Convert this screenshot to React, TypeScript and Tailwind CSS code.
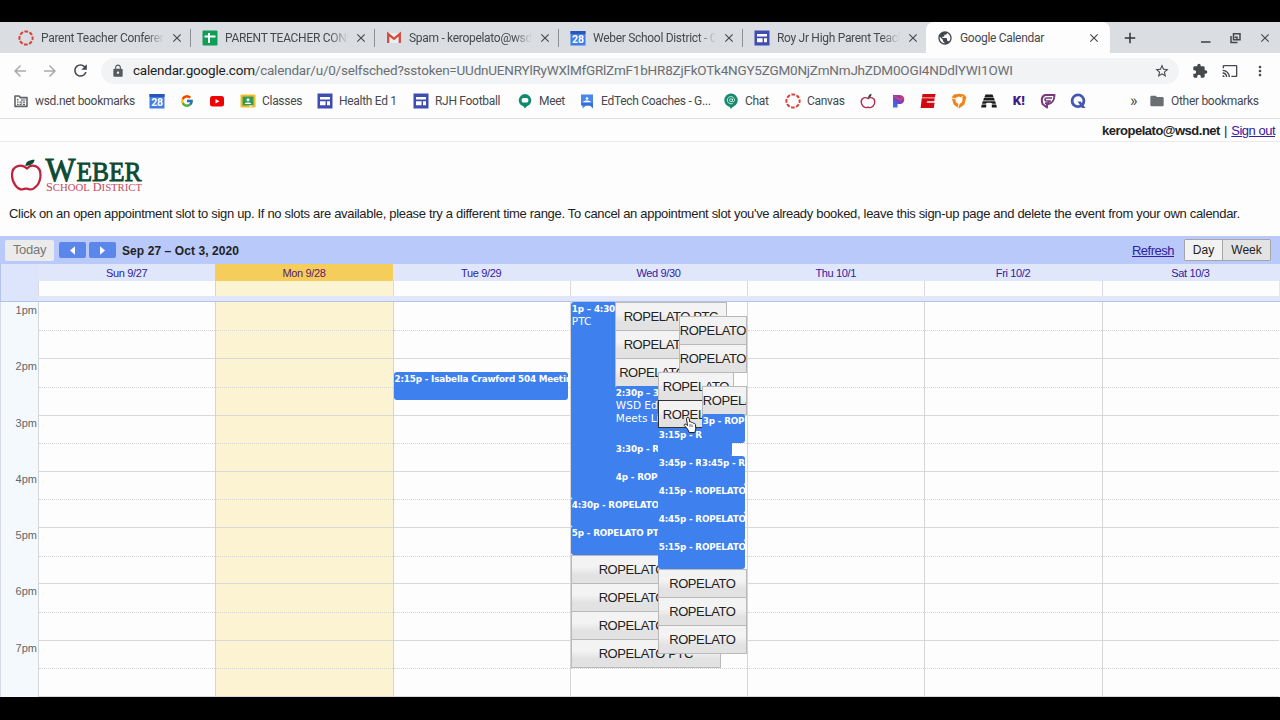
import React from "react";
import {
  MdAdd,
  MdArrowBack,
  MdArrowForward,
  MdCast,
  MdClose,
  MdExtension,
  MdFolder,
  MdLock,
  MdMoreVert,
  MdPublic,
  MdRefresh,
  MdStarBorder,
} from "react-icons/md";
import { FcGoogle } from "react-icons/fc";

const CanvasIcon: React.FC = () => (
  <svg viewBox="0 0 16 16" className="h-4 w-4 shrink-0">
    <circle
      cx="8"
      cy="8"
      r="6.6"
      fill="none"
      stroke="#d9403a"
      strokeWidth="2"
      strokeDasharray="3.7 1.48"
      strokeDashoffset="1.8"
    />
  </svg>
);

const SheetsIcon: React.FC = () => (
  <svg viewBox="0 0 16 16" className="h-4 w-4 shrink-0">
    <rect x="0.5" y="0.5" width="15" height="15" rx="1.2" fill="#109d58" />
    <path d="M7 3v10M2.5 6.5h11" stroke="#fff" strokeWidth="2" />
  </svg>
);

const GmailIcon: React.FC = () => (
  <svg viewBox="0 0 16 16" className="h-4 w-4 shrink-0">
    <path d="M2 3h12v10H2z" fill="#eceff1" />
    <path
      d="M2.2 13V4l5.8 4.8L13.8 4v9"
      fill="none"
      stroke="#d54b3d"
      strokeWidth="2.3"
    />
  </svg>
);

const CalIcon: React.FC = () => (
  <svg viewBox="0 0 16 16" className="h-4 w-4 shrink-0">
    <rect x="0.5" y="1" width="15" height="14.5" fill="#3f7de8" />
    <rect x="0.5" y="1" width="15" height="3" fill="#2a56b8" />
    <text
      x="8"
      y="13"
      textAnchor="middle"
      fontSize="10.5"
      fontWeight="700"
      fontFamily="Roboto, sans-serif"
      fill="#fff"
    >
      28
    </text>
  </svg>
);

const SitesIcon: React.FC = () => (
  <svg viewBox="0 0 16 16" className="h-4 w-4 shrink-0">
    <rect x="0.5" y="0.5" width="15" height="15" fill="#3f4db3" />
    <path d="M3 4h10v2.6H3zM3 8.2h5.6v4H3zM10 8.2h3v4h-3z" fill="#fff" />
  </svg>
);

const ManagedFolderIcon: React.FC = () => (
  <svg viewBox="0 0 16 16" className="h-4 w-4 shrink-0">
    <path
      d="M2 3h4l1.4 1.6H14v8.8H2z"
      fill="none"
      stroke="#5f6368"
      strokeWidth="1.6"
      strokeLinejoin="round"
    />
    <path
      d="M4 6h1.5v1.4H4zM4 8.4h1.5v1.4H4zM4 10.7h1.5V12H4zM6.5 8.4H8v1.4H6.5zM6.5 10.7H8V12H6.5zM9 6.5h3.4v1H9zM10 8.4h2v1.4h-2zM10 10.7h2V12h-2zM8.4 6h.8v6h-.8z"
      fill="#5f6368"
    />
  </svg>
);

const YoutubeIcon: React.FC = () => (
  <svg viewBox="0 0 16 16" className="h-4 w-4 shrink-0">
    <rect x="1" y="3" width="14" height="10.5" rx="2.5" fill="#f00000" />
    <path d="M6.5 6v4.5l4-2.25z" fill="#fff" />
  </svg>
);

const ClassroomIcon: React.FC = () => (
  <svg viewBox="0 0 16 16" className="h-4 w-4 shrink-0">
    <rect x="0.5" y="1.5" width="15" height="13" rx="1" fill="#f0bd26" />
    <rect x="2.6" y="3.6" width="10.8" height="8.8" fill="#2f9a5a" />
    <circle cx="8" cy="6.8" r="1.5" fill="#fff" />
    <path d="M4.8 11c.3-1.9 6.1-1.9 6.4 0z" fill="#fff" />
    <path d="M9 12.4h3.5v1.2H9z" fill="#e8eee9" />
  </svg>
);

const MeetIcon: React.FC = () => (
  <svg viewBox="0 0 16 16" className="h-4 w-4 shrink-0">
    <circle cx="8" cy="7.3" r="6.2" fill="#0f8a6c" />
    <path d="M6 12.5h4.5L7.8 15.5z" fill="#0f8a6c" />
    <rect x="4.7" y="5" width="6.6" height="4.6" rx="1.6" fill="#fff" />
  </svg>
);

const GroupsIcon: React.FC = () => (
  <svg viewBox="0 0 16 16" className="h-4 w-4 shrink-0">
    <path d="M2 1.5h12v11H7l-3.5 3V12.5H2z" fill="#4a86ee" />
    <path d="M2 10h12v5.5l-3-3H3z" fill="#356ed4" />
    <circle cx="8" cy="5.5" r="1.3" fill="#fff" />
    <path d="M4 9.3c.3-2.4 7.7-2.4 8 0z" fill="#fff" />
  </svg>
);

const ChatIcon: React.FC = () => (
  <svg viewBox="0 0 16 16" className="h-4 w-4 shrink-0">
    <circle cx="8" cy="7.3" r="6.7" fill="#17896f" />
    <path d="M6 12.5h5L7.8 16z" fill="#17896f" />
    <circle cx="8" cy="7.3" r="1.5" fill="none" stroke="#d6f0e8" strokeWidth="0.9" />
    <path
      d="M9.5 5.8v2.2c.3 1.2 2 .8 2-.8a3.6 3.6 0 1 0-1.6 3"
      fill="none"
      stroke="#d6f0e8"
      strokeWidth="0.9"
    />
  </svg>
);

const AppleIcon: React.FC = () => (
  <svg viewBox="0 0 16 16" className="h-4 w-4 shrink-0">
    <path
      d="M8.2 5.6C6 4 1.3 4.200 1.200 8.800c0 3.300 2.700 6 5 5.800 1-.4 2.600-.4 3.600 0 2.300.2 5-2.500 5-5.800C14.700 4.200 10 4 8.200 5.600z"
      fill="none"
      stroke="#b02c50"
      strokeWidth="1.4"
    />
    <path d="M8.2 5.500C7.800 3.200 9 1.200 11.500.8 11.700 3 10.500 4.500 8.200 5.500z" fill="#314f3a" />
  </svg>
);

const PIcon: React.FC = () => (
  <svg viewBox="0 0 16 16" className="h-4 w-4 shrink-0">
    <defs>
      <linearGradient id="pgrad" x1="0" y1="1" x2="1" y2="0">
        <stop offset="0" stopColor="#2c7bf0" />
        <stop offset="0.5" stopColor="#7044c8" />
        <stop offset="1" stopColor="#e0306c" />
      </linearGradient>
    </defs>
    <path d="M3 2h7c6 .5 5.500 9 0 9H7.500v3.500H3z" fill="url(#pgrad)" />
    <path d="M4 3l6 4 2.5-2.5" fill="none" stroke="#e44373" strokeWidth="1.3" />
  </svg>
);

const EIcon: React.FC = () => (
  <svg viewBox="0 0 16 16" className="h-4 w-4 shrink-0">
    <path d="M2.5 1h13l-.6 3.6H2z" fill="#cf0a10" />
    <path d="M1.8 5.2H7.500L6.800 9.800h7.800L13.800 15H.6z" fill="#cf0a10" />
    <path d="M7 5.200h7.600l-.4 3H7z" fill="#cf0a10" />
  </svg>
);

const ShieldIcon: React.FC = () => (
  <svg viewBox="0 0 16 16" className="h-4 w-4 shrink-0">
    <path d="M3 1.5l5-.7 5 .7 2.4 2.7-2 7.3L8 15.5l-5.4-4L.6 4.2z" fill="#f08418" />
    <path d="M4.5 5L8 3.6 11.500 5l-.3 4L8 11.500 4.800 9z" fill="#fff" />
    <path d="M1 5l4 1M11.500 3l-1 2M8 11l-1 4" stroke="#fff" strokeWidth="0.9" />
  </svg>
);

const DomeIcon: React.FC = () => (
  <svg viewBox="0 0 16 16" className="h-4 w-4 shrink-0">
    <path
      d="M4.5 1.500h7l1.200 2.900H3.300zM3 5.100h10l.9 2.500H2.100zM1.800 8.200h12.400l.8 2.600h-3.600c-.6-1.400-6.200-1.400-6.800 0H1zM.8 11.400h4.400v3.200H.1zM10.800 11.400h4.400l.7 3.200h-5.100z"
      fill="#1b1b1b"
    />
  </svg>
);

const KahootIcon: React.FC = () => (
  <span className="flex h-4 w-4 shrink-0 items-center justify-center text-[13px] font-black tracking-[0.3px] text-[#401a85]">
    K!
  </span>
);

const FIcon: React.FC = () => (
  <svg viewBox="0 0 16 16" className="h-4 w-4 shrink-0">
    <path
      d="M5 2h9.500c-.2 6-2 8.700-7.500 9.500v3L2.500 11C1 6 2.200 3 5 2z"
      fill="#fff"
      stroke="#79397c"
      strokeWidth="2"
      strokeLinejoin="round"
    />
    <path
      d="M12 5H6.500C4.500 5 4.500 8 6.500 8H11M9 8c0 2-2 2.500-4 2"
      fill="none"
      stroke="#79397c"
      strokeWidth="1.7"
    />
  </svg>
);

const QIcon: React.FC = () => (
  <svg viewBox="0 0 16 16" className="h-4 w-4 shrink-0">
    <circle cx="8" cy="7.8" r="5.9" fill="none" stroke="#4257b2" strokeWidth="2.8" />
    <path d="M7.5 8.5h3.2l4.8 6.5H12z" fill="#4257b2" />
  </svg>
);

const tabs = [
  { icon: <CanvasIcon />, title: "Parent Teacher Conferences" },
  { icon: <SheetsIcon />, title: "PARENT TEACHER CONFERENCE" },
  { icon: <GmailIcon />, title: "Spam - keropelato@wsd.net" },
  { icon: <CalIcon />, title: "Weber School District - Calendar" },
  { icon: <SitesIcon />, title: "Roy Jr High Parent Teacher" },
];

const bookmarks = [
  { icon: <ManagedFolderIcon />, label: "wsd.net bookmarks", width: "w-[136px]" },
  { icon: <CalIcon />, label: "", width: "w-[30px]" },
  { icon: <FcGoogle className="h-4 w-4 shrink-0 p-px" />, label: "", width: "w-[30px]" },
  { icon: <YoutubeIcon />, label: "", width: "w-[31px]" },
  { icon: <ClassroomIcon />, label: "Classes", width: "w-[77px]" },
  { icon: <SitesIcon />, label: "Health Ed 1", width: "w-[96px]" },
  { icon: <SitesIcon />, label: "RJH Football", width: "w-[104px]" },
  { icon: <MeetIcon />, label: "Meet", width: "w-[62px]" },
  { icon: <GroupsIcon />, label: "EdTech Coaches - G...", width: "w-[144px]" },
  { icon: <ChatIcon />, label: "Chat", width: "w-[62px]" },
  { icon: <CanvasIcon />, label: "Canvas", width: "w-[75px]" },
  { icon: <AppleIcon />, label: "", width: "w-[30px]" },
  { icon: <PIcon />, label: "", width: "w-[30px]" },
  { icon: <EIcon />, label: "", width: "w-[31px]" },
  { icon: <ShieldIcon />, label: "", width: "w-[30px]" },
  { icon: <DomeIcon />, label: "", width: "w-[30px]" },
  { icon: <KahootIcon />, label: "", width: "w-[29px]" },
  { icon: <FIcon />, label: "", width: "w-[30px]" },
  { icon: <QIcon />, label: "", width: "w-[30px]" },
];

const days = ["Sun 9/27", "Mon 9/28", "Tue 9/29", "Wed 9/30", "Thu 10/1", "Fri 10/2", "Sat 10/3"];
const hours = ["1pm", "2pm", "3pm", "4pm", "5pm", "6pm", "7pm"];

interface CalItem {
  kind: "event" | "slot";
  x: number;
  y: number;
  w: number;
  h: number;
  title: string;
  body?: string;
  active?: boolean;
}

// x/y are relative to the top left corner of the day column
const tuesday: CalItem[] = [
  { kind: "event", x: 0, y: 70, w: 174, h: 28, title: "2:15p - Isabella Crawford 504 Meeting" },
];

const wednesday: CalItem[] = [
  { kind: "event", x: 0, y: 0, w: 90, h: 197, title: "1p – 4:30p", body: "PTC" },
  { kind: "slot", x: 44, y: 0, w: 112, h: 29, title: "ROPELATO PTC" },
  { kind: "slot", x: 44, y: 28, w: 112, h: 29, title: "ROPELATO PTC" },
  { kind: "slot", x: 44, y: 56, w: 103, h: 29, title: "ROPELATO PTC" },
  { kind: "slot", x: 108, y: 14, w: 68, h: 29, title: "ROPELATO" },
  { kind: "slot", x: 108, y: 42, w: 68, h: 29, title: "ROPELATO" },
  { kind: "event", x: 44, y: 84, w: 90, h: 57, title: "2:30p – 3:30p", body: "WSD EdTech\nMeets Live" },
  { kind: "event", x: 44, y: 140, w: 90, h: 29, title: "3:30p - ROPELATO" },
  { kind: "event", x: 44, y: 168, w: 90, h: 29, title: "4p - ROPELATO" },
  { kind: "event", x: 0, y: 196, w: 130, h: 29, title: "4:30p - ROPELATO PTC" },
  { kind: "event", x: 0, y: 224, w: 130, h: 29, title: "5p - ROPELATO PTC" },
  { kind: "slot", x: 87, y: 70, w: 76, h: 29, title: "ROPELATO" },
  { kind: "slot", x: 87, y: 98, w: 76, h: 28, title: "ROPELATO", active: true },
  { kind: "slot", x: 131, y: 84, w: 45, h: 29, title: "ROPELATO" },
  { kind: "event", x: 87, y: 126, w: 74, h: 29, title: "3:15p - R" },
  { kind: "event", x: 131, y: 112, w: 43, h: 29, title: "3p - ROPELATO" },
  { kind: "event", x: 87, y: 154, w: 60, h: 29, title: "3:45p - R" },
  { kind: "event", x: 130, y: 154, w: 44, h: 29, title: "3:45p - ROPELATO" },
  { kind: "event", x: 87, y: 182, w: 87, h: 29, title: "4:15p - ROPELATO" },
  { kind: "event", x: 87, y: 210, w: 87, h: 29, title: "4:45p - ROPELATO" },
  { kind: "slot", x: 0, y: 253, w: 150, h: 29, title: "ROPELATO PTC" },
  { kind: "slot", x: 0, y: 281, w: 150, h: 29, title: "ROPELATO PTC" },
  { kind: "slot", x: 0, y: 309, w: 150, h: 29, title: "ROPELATO PTC" },
  { kind: "slot", x: 0, y: 337, w: 150, h: 29, title: "ROPELATO PTC" },
  { kind: "event", x: 87, y: 238, w: 87, h: 29, title: "5:15p - ROPELATO" },
  { kind: "slot", x: 87, y: 267, w: 89, h: 29, title: "ROPELATO" },
  { kind: "slot", x: 87, y: 295, w: 89, h: 29, title: "ROPELATO" },
  { kind: "slot", x: 87, y: 323, w: 89, h: 29, title: "ROPELATO" },
];

const CalendarItem: React.FC<{ item: CalItem }> = ({ item }) => {
  const box = { left: item.x, top: item.y, width: item.w, height: item.h };
  if (item.kind === "slot") {
    return (
      <div
        style={box}
        className={`absolute flex items-center overflow-hidden border bg-linear-to-b from-[#f3f3f3] from-40% to-[#e2e2e2] to-70% pt-px text-[13px] tracking-[-0.4px] whitespace-nowrap text-[#222] ${
          item.active ? "border-[#333]" : "border-[#b9b9b9]"
        } ${item.w < 60 ? "justify-start" : "justify-center"}`}
      >
        {item.title}
      </div>
    );
  }
  return (
    <div
      style={box}
      className="absolute overflow-hidden rounded-[3px] bg-[#3e80ee] pt-px pl-px font-['DejaVu_Sans',sans-serif] text-white"
    >
      <div className="text-[8.8px] leading-[12px] font-bold tracking-[-0.18px] whitespace-nowrap">{item.title}</div>
      {item.body && (
        <div className="text-[10.5px] leading-[13px] whitespace-pre">{item.body}</div>
      )}
    </div>
  );
};

const BrowserChrome: React.FC = () => (
  <div className="font-['Roboto',sans-serif] text-[#45494d]">
    <div className="flex h-[31px] items-stretch bg-[#dadde1] pl-[7px]">
      {tabs.map((tab, i) => (
        <div key={tab.title} className="flex w-[184px] items-center pl-[11px]">
          {tab.icon}
          <div className="ml-[7px] w-[123px] overflow-hidden text-[12px] tracking-[-0.3px] whitespace-nowrap mask-r-from-85%">
            {tab.title}
          </div>
          <MdClose className="ml-[6px] h-[14px] w-[14px] shrink-0" />
          {i < tabs.length - 1 && <div className="ml-auto h-[18px] w-px bg-[#8d9195]" />}
        </div>
      ))}
      <div className="-ml-px flex w-[184px] items-center rounded-t-lg bg-[#fdfdfd] pl-[11px]">
        <MdPublic className="h-4 w-4 shrink-0" />
        <div className="ml-[7px] w-[127px] text-[12px] tracking-[-0.3px]">Google Calendar</div>
        <MdClose className="h-[14px] w-[14px] shrink-0" />
      </div>
      <div className="flex flex-1 items-center pl-[11px]">
        <MdAdd className="h-[18px] w-[18px] text-[#333]" />
        <div className="mr-[8px] ml-auto flex items-center gap-[15px]">
          <svg viewBox="0 0 14 14" className="h-[14px] w-[14px]">
            <path d="M1 11h9.5" stroke="currentColor" strokeWidth="1.6" />
          </svg>
          <svg
            viewBox="0 0 14 14"
            className="h-[14px] w-[14px]"
            fill="none"
            stroke="currentColor"
            strokeWidth="1.5"
          >
            <path d="M4.5 2.8h6.500v6H4.500z" />
            <path d="M2 5v6.500h6.500M5.500 6.200h2.500V9" />
          </svg>
          <MdClose className="h-[14px] w-[14px]" />
        </div>
      </div>
    </div>
    <div className="flex h-[35px] items-center bg-[#fdfdfd]">
      <div className="flex w-[101px] items-center gap-[12px] pl-[11px]">
        <MdArrowBack className="h-[18px] w-[18px] shrink-0 text-[#aaa]" />
        <MdArrowForward className="h-[18px] w-[18px] shrink-0 text-[#aaa]" />
        <MdRefresh className="h-[19px] w-[19px] shrink-0" />
      </div>
      <div className="flex h-[26px] w-[1078px] items-center rounded-full bg-[#f1f3f4] pl-[10px]">
        <MdLock className="h-[14px] w-[14px] shrink-0 text-[#55595d]" />
        <div className="ml-[8px] text-[13.5px] tracking-[-0.21px] whitespace-nowrap text-[#6b6f73]">
          <span className="text-[#222]">calendar.google.com</span>
          /calendar/u/0/selfsched?sstoken=UUdnUENRYlRyWXlMfGRlZmF1bHR8ZjFkOTk4NGY5ZGM0NjZmNmJhZDM0OGI4NDdlYWI1OWI
        </div>
        <MdStarBorder className="mr-[9px] ml-auto h-4 w-4 shrink-0" />
      </div>
      <div className="flex flex-1 items-center gap-[14px] pl-[13px]">
        <MdExtension className="h-4 w-4 shrink-0" />
        <MdCast className="h-4 w-4 shrink-0" />
        <MdMoreVert className="h-4 w-4 shrink-0" />
      </div>
    </div>
    <div className="flex h-[31px] items-center border-b border-[#dcdee0] bg-[#fdfdfd] pb-[4px] pl-[13px] text-[12px] tracking-[-0.3px]">
      {bookmarks.map((mark, i) => (
        <div key={i} className={`flex shrink-0 items-center gap-[6px] whitespace-nowrap ${mark.width}`}>
          {mark.icon}
          {mark.label && <span>{mark.label}</span>}
        </div>
      ))}
      <div className="ml-[30px] w-[19px] text-[16px] leading-none">»</div>
      <MdFolder className="h-4 w-4 shrink-0 text-[#6b6f73]" />
      <div className="ml-[6px] whitespace-nowrap">Other bookmarks</div>
    </div>
  </div>
);

const Logo: React.FC = () => (
  <svg viewBox="0 0 134 36" className="h-[36px] w-[134px]" fontFamily="'Liberation Serif', serif">
    <path
      d="M17 11.500C12 6.500 2 8 2 18c0 8 5.500 14.500 10 14.500 2.300-1 5.700-1 8 0 4.500 0 10.500-5.500 10.500-14.500C30.500 8 21.500 6.500 17 11.500z"
      fill="none"
      stroke="#c2213c"
      strokeWidth="2.2"
    />
    <path d="M15.500 9C15.500 5 19 2.800 24.600 2.800 24 7 20.500 8.500 15.500 9z" fill="#0d4a34" />
    <g fill="#0d4a34" stroke="#0d4a34">
      <text x="35.5" y="24" fontSize="33" strokeWidth="0.9" textLength="30" lengthAdjust="spacingAndGlyphs">
        W
      </text>
      <text x="66.5" y="24" fontSize="27.5" strokeWidth="0.9" textLength="65" lengthAdjust="spacingAndGlyphs">
        EBER
      </text>
    </g>
    <g fill="#c64a5e">
      <text x="36" y="33.5" fontSize="12" textLength="96" lengthAdjust="spacingAndGlyphs">
        S<tspan fontSize="10.5">CHOOL</tspan> D<tspan fontSize="10.5">ISTRICT</tspan>
      </text>
    </g>
  </svg>
);

const CalendarGrid: React.FC = () => (
  <div>
    <div className="flex h-[38px] border-b border-[#b5c3ec] bg-[#e0e7fb]">
      <div className="w-[38px] shrink-0 border-l border-[#b5c3ec] bg-[#dce5fb]" />
      <div className="grid w-[1241px] shrink-0 grid-cols-7 text-[11px] tracking-[-0.35px] text-[#3320a0]">
        {days.map((day, i) => (
          <div key={day} className="flex flex-col">
            <div
              className={`h-[17px] text-center leading-[18px] ${
                i === 1 ? "bg-[#f5cd5a] text-[#5a1a70]" : ""
              }`}
            >
              {day}
            </div>
            <div
              className={`h-[15px] border-l ${
                i === 1 ? "border-[#f0d878] bg-[#fbf3d2]" : "border-[#d8dbe0] bg-[#fdfdfd]"
              }`}
            />
          </div>
        ))}
      </div>
    </div>
    <div className="flex h-[395px] overflow-hidden bg-[#fdfdfd]">
      <div className="w-[38px] shrink-0 border-l border-[#d5ddea] bg-[#f3f9fc]">
        {hours.map((hour) => (
          <div key={hour} className="h-[56.25px] pr-[1px] text-right text-[11px] leading-[16px] text-[#666]">
            {hour}
          </div>
        ))}
      </div>
      <div className="grid w-[1241px] shrink-0 grid-cols-7">
        {days.map((day, i) => (
          <div
            key={day}
            className={`relative border-l ${
              i === 1
                ? "border-[#f0d878] bg-[#fbf3d2]"
                : i === 2
                  ? "border-[#f0d878]"
                  : "border-[#d6d6d6]"
            }`}
          >
            {[...hours, "8pm"].map((hour, n) => (
              <div key={hour} className={`h-[56.25px] ${n > 0 ? "border-t border-[#d9d9d9]" : ""}`}>
                <div className="h-1/2" />
                <div className="border-t border-dotted border-[#d6d6d6]" />
              </div>
            ))}
            {i === 2 && tuesday.map((item, n) => <CalendarItem key={n} item={item} />)}
            {i === 3 && wednesday.map((item, n) => <CalendarItem key={n} item={item} />)}
            {i === 3 && (
              <svg viewBox="0 0 14 18" className="absolute top-[114px] left-[112px] h-[18px] w-[14px]">
                <path
                  d="M4 1.5c1.500-.8 2 .2 2.200 1.200l.6 3.300c1-.5 1.700 0 2 .7.900-.4 1.600.1 1.900.7 1-.2 1.700.4 1.800 1.500l.3 4-1 3.600H6.200L4.500 13 1.300 9.500c-.6-1 .8-1.900 1.800-1l1.400 1L3.500 3z"
                  fill="#fff"
                  stroke="#222"
                  strokeWidth="1"
                />
                <path d="M7 8v3M9 8.5v2.5" stroke="#222" strokeWidth="0.7" />
              </svg>
            )}
          </div>
        ))}
      </div>
    </div>
  </div>
);

const App: React.FC = () => {
  return (
    <div className="flex h-[720px] w-[1280px] flex-col overflow-hidden bg-black py-[22px] font-['Liberation_Sans',sans-serif]">
      <BrowserChrome />
      <div className="h-[578px] overflow-hidden bg-[#fdfdfd] text-[13px] text-[#222]">
        <div className="flex h-[23px] items-center justify-end border-b border-[#ebebeb] pt-[2px] pr-[5px]">
          <span className="font-bold tracking-[-0.5px]">keropelato@wsd.net</span>
          <span className="mx-[4px]">|</span>
          <a className="tracking-[-0.5px] text-[#3320a0] underline">Sign out</a>
        </div>
        <div className="h-[94px] pt-[15px] pl-[10px]">
          <Logo />
          <p className="mt-[11px] -ml-px leading-[19px] tracking-[-0.315px] whitespace-nowrap">
            Click on an open appointment slot to sign up. If no slots are available, please try a different time range. To
            cancel an appointment slot you've already booked, leave this sign-up page and delete the event from your own
            calendar.
          </p>
        </div>
        <div className="flex h-[28px] items-center bg-[#b8c9fa] pl-[5px]">
          <button className="h-[21px] w-[49px] rounded-[2px] bg-[#ebebeb] tracking-[-0.3px] text-[#777]">Today</button>
          <button className="ml-[5px] flex h-[16px] w-[27px] items-center justify-center rounded-[2px] bg-[#5b86ea]">
            <svg viewBox="0 0 6 10" className="h-[9px] w-[5px]">
              <path d="M6 0v10L0 5z" fill="#fff" />
            </svg>
          </button>
          <button className="ml-[3px] flex h-[16px] w-[27px] items-center justify-center rounded-[2px] bg-[#5b86ea]">
            <svg viewBox="0 0 6 10" className="h-[9px] w-[5px]">
              <path d="M0 0v10l6-5z" fill="#fff" />
            </svg>
          </button>
          <div className="mt-px ml-[6px] text-[12px] font-bold tracking-[0.08px]">Sep 27 – Oct 3, 2020</div>
          <a className="mt-px ml-auto tracking-[-0.5px] text-[#3320a0] underline">Refresh</a>
          <div className="mr-[9px] ml-[10px] flex h-[22px] rounded-[2px] border border-[#a5a5a5] text-[12px] leading-[20px]">
            <button className="w-[37px] bg-[#f2f2f2]">Day</button>
            <button className="w-[48px] border-l border-[#a5a5a5] bg-[#e3e3e3]">Week</button>
          </div>
        </div>
        <CalendarGrid />
      </div>
    </div>
  );
};

export default App;
